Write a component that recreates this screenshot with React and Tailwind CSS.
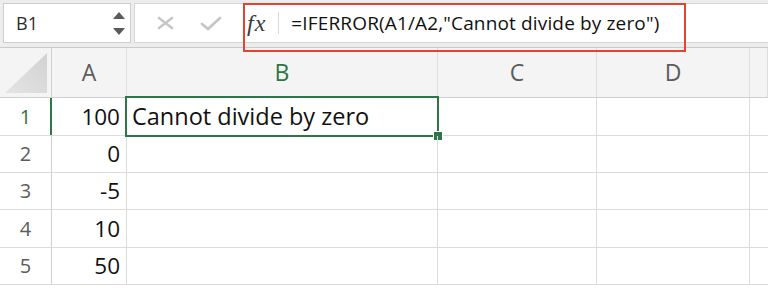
import React from "react";

const COLS = "grid grid-cols-[52px_75px_311px_159px_153px_1fr]";
const HEADERS = ["A", "B", "C", "D", ""];
const ROWS = [
  { n: 1, a: "100", h: "h-[38px]" },
  { n: 2, a: "0", h: "h-[37px]" },
  { n: 3, a: "-5", h: "h-[37px]" },
  { n: 4, a: "10", h: "h-[38px]" },
  { n: 5, a: "50", h: "h-[37px]" },
];

function Toolbar() {
  return (
    <div className="relative h-[48px] bg-[#ededed] border-b border-[#c9c9c9] pt-[3px] flex gap-[3px] pl-[3px]">
      {/* name box */}
      <div className="w-[128px] h-[40px] bg-white border border-[#cdcdcd] flex items-center justify-between pl-[12px] pr-[5px]">
        <span className="text-[18px] text-[#2b2b2b]">B1</span>
        <div className="flex flex-col gap-[9px]">
          <svg width="12" height="7" viewBox="0 0 12 7"><path d="M6 0 L12 7 L0 7 Z" fill="#5a5a5a" /></svg>
          <svg width="12" height="7" viewBox="0 0 12 7"><path d="M0 0 L12 0 L6 7 Z" fill="#5a5a5a" /></svg>
        </div>
      </div>
      {/* formula bar */}
      <div className="flex-1 h-[40px] bg-white border-t border-b border-l border-[#d5d5d5] flex items-center">
        <svg className="ml-[22px]" width="17" height="14" viewBox="0 0 17 14">
          <path d="M2 2 L15 12 M15 2 L2 12" stroke="#c6c6c6" strokeWidth="2.6" strokeLinecap="round" />
        </svg>
        <svg className="ml-[26px]" width="22" height="15" viewBox="0 0 22 15">
          <path d="M2 8 L8 13 L20 2" fill="none" stroke="#c6c6c6" strokeWidth="2.8" strokeLinecap="round" strokeLinejoin="round" />
        </svg>
        <span className="ml-[25px] text-[24px] italic text-[#3c3c3c] font-['Liberation_Serif',serif] leading-none tracking-[1px]">fx</span>
        <div className="ml-[12px] w-px h-[22px] bg-[#d9d9d9]" />
        <span className="ml-[12px] text-[19px] tracking-[0.15px] text-[#111] whitespace-nowrap">
          =IFERROR(A1/A2,"Cannot divide by zero")
        </span>
      </div>
      {/* annotation box */}
      <div className="absolute left-[243px] top-[3px] w-[443px] h-[49px] border-2 border-[#e4432d] z-10" />
    </div>
  );
}

function Corner() {
  return (
    <div className="h-[50px] bg-[#f4f4f4] border-r border-b border-[#cfcfcf] flex items-center justify-center">
      <svg width="42" height="40" viewBox="0 0 42 40">
        <defs>
          <linearGradient id="g" x1="0" y1="1" x2="1" y2="0">
            <stop offset="0" stopColor="#e4e4e4" />
            <stop offset="1" stopColor="#d2d2d2" />
          </linearGradient>
        </defs>
        <path d="M42 0 L42 40 L0 40 Z" fill="url(#g)" />
      </svg>
    </div>
  );
}

export default function App() {
  return (
    <div className="w-[768px] h-[288px] overflow-hidden bg-white font-['Open_Sans',sans-serif]">
      <Toolbar />
      <div className={COLS}>
        <Corner />
        {HEADERS.map((h) => (
          <div
            key={h || "e"}
            className={`h-[50px] bg-[#f4f4f4] border-r border-b border-r-[#dedede] border-b-[#cfcfcf] flex items-center justify-center text-[23px] ${h === "B" ? "text-[#2e7547]" : "text-[#5c5c5c]"}`}
          >
            {h}
          </div>
        ))}
        {ROWS.map((r) => (
          <React.Fragment key={r.n}>
            <div
              className={`${r.h} relative border-b border-r border-b-[#dcdcdc] border-r-[#cfcfcf] flex items-center justify-center text-[20px] ${r.n === 1 ? "text-[#2e7547]" : "text-[#5c5c5c]"}`}
            >
              {r.n}
              {r.n === 1 && <div className="absolute right-[-1px] top-0 bottom-0 w-[2px] bg-[#2e7547]" />}
            </div>
            <div className={`${r.h} border-b border-r border-[#dcdcdc] flex items-center justify-end pr-[6px] text-[22.5px] text-[#111]`}>
              {r.a}
            </div>
            <div className={`${r.h} relative border-b border-r border-[#dcdcdc] flex items-center pl-[5px] text-[23.5px] text-[#111] whitespace-nowrap`}>
              {r.n === 1 && "Cannot divide by zero"}
              {r.n === 1 && (
                <>
                  <div className="absolute inset-[-2px] border-2 border-[#2e7547]" />
                  <div className="absolute right-[-6px] bottom-[-6px] w-[10px] h-[10px] bg-[#2e7547] border border-white" />
                </>
              )}
            </div>
            <div className={`${r.h} border-b border-r border-[#dcdcdc]`} />
            <div className={`${r.h} border-b border-r border-[#dcdcdc]`} />
            <div className={`${r.h} border-b border-[#dcdcdc]`} />
          </React.Fragment>
        ))}
      </div>
    </div>
  );
}
